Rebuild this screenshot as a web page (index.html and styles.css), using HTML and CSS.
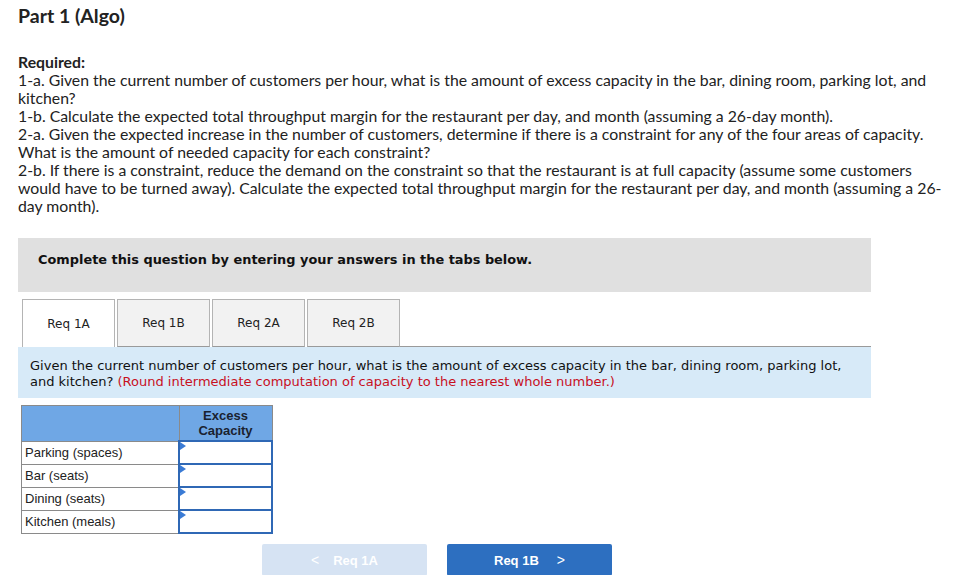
FILE: index.html
```html
<!DOCTYPE html>
<html>
<head>
<meta charset="utf-8">
<link rel="stylesheet" href="styles.css">
</head>
<body>
<div class="page">
  <h1 class="title">Part 1 (Algo)</h1>
  <div class="required">
    <div class="req-head">Required:</div>
    <div>1-a. Given the current number of customers per hour, what is the amount of excess capacity in the bar, dining room, parking lot, and kitchen?</div>
    <div>1-b. Calculate the expected total throughput margin for the restaurant per day, and month (assuming a 26-day month).</div>
    <div>2-a. Given the expected increase in the number of customers, determine if there is a constraint for any of the four areas of capacity. What is the amount of needed capacity for each constraint?</div>
    <div>2-b. If there is a constraint, reduce the demand on the constraint so that the restaurant is at full capacity (assume some customers would have to be turned away). Calculate the expected total throughput margin for the restaurant per day, and month (assuming a 26-day month).</div>
  </div>

  <div class="complete">Complete this question by entering your answers in the tabs below.</div>

  <div class="tabs">
    <div class="tab active">Req 1A</div>
    <div class="tab">Req 1B</div>
    <div class="tab">Req 2A</div>
    <div class="tab">Req 2B</div>
    <div class="tab-fill"></div>
  </div>

  <div class="info">Given the current number of customers per hour, what is the amount of excess capacity in the bar, dining room, parking lot, and kitchen? <span class="red">(Round intermediate computation of capacity to the nearest whole number.)</span></div>

  <table class="grid">
    <tr class="head">
      <th class="c1"></th>
      <th class="c2">Excess<br>Capacity</th>
    </tr>
    <tr><td class="c1">Parking (spaces)</td><td class="c2 input"><span class="tri"></span></td></tr>
    <tr><td class="c1">Bar (seats)</td><td class="c2 input"><span class="tri"></span></td></tr>
    <tr><td class="c1">Dining (seats)</td><td class="c2 input"><span class="tri"></span></td></tr>
    <tr><td class="c1">Kitchen (meals)</td><td class="c2 input"><span class="tri"></span></td></tr>
  </table>

  <div class="nav">
    <div class="btn prev"><span class="chev">&lt;</span>Req 1A</div>
    <div class="btn next">Req 1B<span class="chev">&gt;</span></div>
  </div>
</div>
</body>
</html>
```

FILE: styles.css
```css
html, body {
  margin: 0;
  padding: 0;
  background: #fff;
}
.page {
  padding: 0 0 0 18px;
  width: 935px;
  color: #222;
  font-family: Lato, "Liberation Sans", sans-serif;
}
.title {
  margin: 0;
  padding-top: 4px;
  font-size: 19.5px;
  line-height: 24px;
  font-weight: 700;
  color: #222;
}
.required {
  margin-top: 25px;
  font-size: 15.8px;
  line-height: 18px;
  color: #222;
}
.req-head {
  font-weight: 700;
}
.complete {
  margin-top: 23px;
  width: 853px;
  height: 54px;
  box-sizing: border-box;
  background: #e0e0e0;
  padding: 13px 0 0 20px;
  font-family: Verdana, "DejaVu Sans", sans-serif;
  font-weight: 700;
  font-size: 12.9px;
  line-height: 18px;
  color: #111;
}
.tabs {
  display: flex;
  margin-top: 7px;
  padding-left: 4px;
  width: 853px;
  box-sizing: border-box;
  height: 48px;
}
.tab {
  width: 93px;
  box-sizing: border-box;
  border: 1px solid #b4b4b4;
  background: #f2f2f2;
  margin-right: 2px;
  display: flex;
  align-items: center;
  justify-content: center;
  font-family: Verdana, "DejaVu Sans", sans-serif;
  font-size: 12px;
  color: #222;
}
.tab.active {
  background: #fff;
  border-bottom: none;
}
.tab-fill {
  flex: 1;
  border-bottom: 1px solid #9a9a9a;
  margin-left: -2px;
}
.tab:not(.active) {
  border-bottom: 1px solid #9a9a9a;
}
.info {
  width: 853px;
  box-sizing: border-box;
  height: 51px;
  background: #d7eaf8;
  padding: 11px 20px 0 12px;
  font-family: Verdana, "DejaVu Sans", sans-serif;
  font-size: 13px;
  line-height: 16px;
  color: #111;
}
.red {
  color: #c8101e;
}
.grid {
  margin-top: 7px;
  margin-left: 3px;
  border-collapse: collapse;
  font-family: Arial, "Liberation Sans", sans-serif;
  font-size: 13px;
  color: #222;
}
.grid th, .grid td {
  border: 1px solid #8a8a8a;
  padding: 0;
}
.grid .head th {
  background: #6fa7e5;
  height: 34px;
  font-weight: 700;
  font-size: 13px;
  line-height: 15px;
  color: #1a2230;
  vertical-align: middle;
}
.grid .c1 {
  width: 153px;
  padding-left: 3px;
  text-align: left;
}
.grid th.c2 {
  width: 92px;
  text-align: center;
}
.grid td {
  height: 21px;
  line-height: 16px;
}
.grid td.input {
  position: relative;
  border: 2px solid #2f68b5;
  background: #fff;
}
.tri {
  position: absolute;
  left: 0;
  top: 0;
  width: 0;
  height: 0;
  border-top: 4px solid transparent;
  border-bottom: 4px solid transparent;
  border-left: 6px solid #3a7bd5;
}
.nav {
  display: flex;
  gap: 20px;
  margin-top: 10px;
  padding-left: 244px;
}
.btn {
  width: 165px;
  height: 32px;
  border-radius: 2px;
  display: flex;
  align-items: center;
  justify-content: center;
  font-family: Arial, "Liberation Sans", sans-serif;
  font-weight: 700;
  font-size: 13px;
  color: #fff;
}
.btn.prev {
  background: #d6e3f3;
}
.btn.next {
  background: #2d6fc0;
}
.chev {
  font-weight: 400;
  font-size: 14px;
}
.prev .chev {
  margin-right: 14px;
}
.next .chev {
  margin-left: 18px;
}
```
